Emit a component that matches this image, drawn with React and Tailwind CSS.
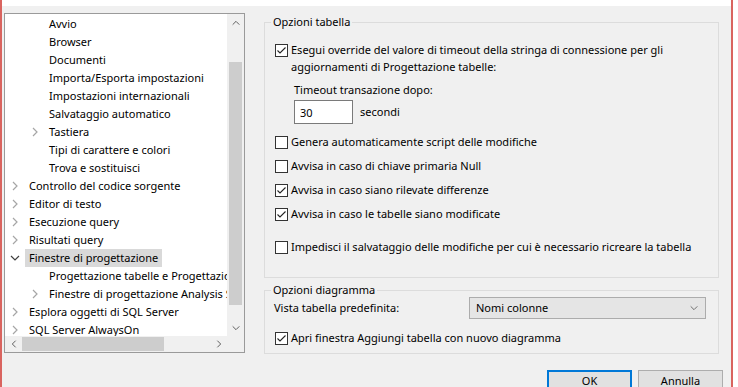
import { useState } from 'react'

// Tree nodes of the options dialog (level 0 = top level, 1 = child)
const treeItems = [
    { label: 'Avvio', level: 1 },
    { label: 'Browser', level: 1 },
    { label: 'Documenti', level: 1 },
    { label: 'Importa/Esporta impostazioni', level: 1 },
    { label: 'Impostazioni internazionali', level: 1 },
    { label: 'Salvataggio automatico', level: 1 },
    { label: 'Tastiera', level: 1, arrow: 'closed' },
    { label: 'Tipi di carattere e colori', level: 1 },
    { label: 'Trova e sostituisci', level: 1 },
    { label: 'Controllo del codice sorgente', level: 0, arrow: 'closed' },
    { label: 'Editor di testo', level: 0, arrow: 'closed' },
    { label: 'Esecuzione query', level: 0, arrow: 'closed' },
    { label: 'Risultati query', level: 0, arrow: 'closed' },
    { label: 'Finestre di progettazione', level: 0, arrow: 'open', selected: true },
    { label: 'Progettazione tabelle e Progettazione database', level: 1 },
    { label: 'Finestre di progettazione Analysis Services', level: 1, arrow: 'closed' },
    { label: 'Esplora oggetti di SQL Server', level: 0, arrow: 'closed' },
    { label: 'SQL Server AlwaysOn', level: 0, arrow: 'closed' },
]

function Chevron({ dir = 'right', className = '' }) {
    const points = {
        right: '4,2 8,6 4,10',
        left: '8,2 4,6 8,10',
        down: '2,4 6,8 10,4',
        up: '2,8 6,4 10,8',
    }[dir]
    return (
        <svg viewBox="0 0 12 12" className={className} fill="none" stroke="currentColor">
            <polyline points={points} strokeWidth="1.2" />
        </svg>
    )
}

function CheckBox({ checked, onChange }) {
    return (
        <button
            onClick={onChange}
            className="w-[13px] h-[13px] shrink-0 border border-[#333333] bg-white flex items-center justify-center"
        >
            {checked && (
                <svg viewBox="0 0 11 11" className="w-[11px] h-[11px]" fill="none" stroke="#222222">
                    <polyline points="1.5,5.5 4,8 9.5,2.5" strokeWidth="1.1" />
                </svg>
            )}
        </button>
    )
}

function OptionRow({ label, checked, onChange, className = '' }) {
    return (
        <div className={`h-[24px] flex items-center pl-[10px] ${className}`}>
            <CheckBox checked={checked} onChange={onChange} />
            <span className="ml-[3px] whitespace-nowrap">{label}</span>
        </div>
    )
}

function TreeView() {
    return (
        <div className="w-[241px] h-[340px] shrink-0 border border-[#9a9a9a] bg-white flex flex-col">
            <div className="flex flex-1 min-h-0">
                {/* Tree rows */}
                <div className="flex-1 overflow-hidden pt-[1px]">
                    {treeItems.map((item) => (
                        <div
                            key={item.label}
                            className={`h-[18px] flex items-center whitespace-nowrap ${item.level === 0 ? 'pl-[4px]' : 'pl-[24px]'}`}
                        >
                            <span className="w-[12px] h-[12px] shrink-0 flex items-center justify-center">
                                {item.arrow === 'closed' && <Chevron dir="right" className="w-[12px] h-[12px] text-[#a6a6a6]" />}
                                {item.arrow === 'open' && <Chevron dir="down" className="w-[12px] h-[12px] text-[#404040]" />}
                            </span>
                            <span className={`ml-[4px] px-[4px] leading-[18px] ${item.selected ? 'bg-[#d9d9d9]' : ''}`}>
                                {item.label}
                            </span>
                        </div>
                    ))}
                </div>
                {/* Vertical scrollbar */}
                <div className="w-[17px] shrink-0 bg-[#f0f0f0] flex flex-col items-center">
                    <div className="h-[17px] flex items-center justify-center text-[#606060]">
                        <Chevron dir="up" className="w-[10px] h-[10px]" />
                    </div>
                    <div className="flex-1 w-full px-[2px] pt-[31px] pb-[14px]">
                        <div className="h-full bg-[#cdcdcd]" />
                    </div>
                    <div className="h-[17px] flex items-center justify-center text-[#606060]">
                        <Chevron dir="down" className="w-[10px] h-[10px]" />
                    </div>
                </div>
            </div>
            {/* Horizontal scrollbar */}
            <div className="h-[16px] shrink-0 flex bg-[#f0f0f0]">
                <div className="flex-1 flex items-center">
                    <div className="w-[17px] h-full flex items-center justify-center text-[#606060]">
                        <Chevron dir="left" className="w-[10px] h-[10px]" />
                    </div>
                    <div className="flex-1 h-full py-[1px]">
                        <div className="w-[142px] h-full bg-[#cdcdcd]" />
                    </div>
                    <div className="w-[17px] h-full flex items-center justify-center text-[#606060]">
                        <Chevron dir="right" className="w-[10px] h-[10px]" />
                    </div>
                </div>
                <div className="w-[17px] shrink-0 bg-[#f0f0f0]" />
            </div>
        </div>
    )
}

export default function App() {
    const [opts, setOpts] = useState({
        override: true,
        script: false,
        nullKey: false,
        differences: true,
        modified: true,
        prevent: false,
        addTable: true,
    })
    const [timeout, setTimeoutValue] = useState('30')
    const toggle = (key) => setOpts({ ...opts, [key]: !opts[key] })

    return (
        <div className="w-[738px] h-[387px] overflow-hidden flex bg-white text-[11px] text-black font-['Noto_Sans','Liberation_Sans',sans-serif]">
            <div className="w-[2px] shrink-0 bg-[#d9645f]" />
            <div className="w-[729px] shrink-0 flex flex-col">
                <div className="h-[6px] shrink-0 bg-white" />
                <div className="flex-1 min-h-0 bg-[#f0f0f0] pl-[2px] pt-[7px]">
                    <div className="flex">
                        <TreeView />

                        {/* Options */}
                        <div className="ml-[19px] w-[455px] pt-[1px]">
                            <fieldset className="border border-[#dcdcdc] pb-[18px]">
                                <legend className="ml-[6px] px-[2px] leading-[16px]">Opzioni tabella</legend>
                                <div className="flex items-start pl-[10px] mt-[11px]">
                                    <div className="mt-[3px]">
                                        <CheckBox checked={opts.override} onChange={() => toggle('override')} />
                                    </div>
                                    <p className="ml-[3px] leading-[17px]">
                                        Esegui override del valore di timeout della stringa di connessione per gli
                                        <br />
                                        aggiornamenti di Progettazione tabelle:
                                    </p>
                                </div>
                                <div className="pl-[29px] mt-[6px] leading-[17px]">Timeout transazione dopo:</div>
                                <div className="pl-[29px] mt-[2px] flex items-center">
                                    <input
                                        value={timeout}
                                        onChange={(e) => setTimeoutValue(e.target.value)}
                                        className="w-[59px] h-[24px] border border-[#7a7a7a] bg-white px-[5px] outline-none"
                                    />
                                    <span className="ml-[7px]">secondi</span>
                                </div>
                                <OptionRow className="mt-[6px]" label="Genera automaticamente script delle modifiche" checked={opts.script} onChange={() => toggle('script')} />
                                <OptionRow label="Avvisa in caso di chiave primaria Null" checked={opts.nullKey} onChange={() => toggle('nullKey')} />
                                <OptionRow label="Avvisa in caso siano rilevate differenze" checked={opts.differences} onChange={() => toggle('differences')} />
                                <OptionRow label="Avvisa in caso le tabelle siano modificate" checked={opts.modified} onChange={() => toggle('modified')} />
                                <OptionRow className="mt-[9px]" label="Impedisci il salvataggio delle modifiche per cui è necessario ricreare la tabella" checked={opts.prevent} onChange={() => toggle('prevent')} />
                            </fieldset>

                            <fieldset className="mt-[5px] border border-[#dcdcdc] pb-[3px]">
                                <legend className="ml-[6px] px-[2px] leading-[14px]">Opzioni diagramma</legend>
                                <div className="h-[22px] flex items-center pl-[9px]">
                                    <span className="w-[195px]">Vista tabella predefinita:</span>
                                    <div className="w-[237px] h-[22px] border border-[#acacac] bg-[#e5e5e5] flex items-center justify-between pl-[6px] pr-[6px]">
                                        <span>Nomi colonne</span>
                                        <Chevron dir="down" className="w-[10px] h-[10px] text-[#707070]" />
                                    </div>
                                </div>
                                <OptionRow className="mt-[7px]" label="Apri finestra Aggiungi tabella con nuovo diagramma" checked={opts.addTable} onChange={() => toggle('addTable')} />
                            </fieldset>
                        </div>
                    </div>

                    {/* Dialog buttons */}
                    <div className="mt-[16px] flex justify-end pr-[8px] gap-[6px]">
                        <button className="w-[85px] h-[23px] border-2 border-[#0078d7] bg-[#e1e1e1]">OK</button>
                        <button className="w-[85px] h-[23px] border border-[#adadad] bg-[#e1e1e1]">Annulla</button>
                    </div>
                </div>
            </div>
            <div className="w-[2px] shrink-0 bg-[#d9645f]" />
            <div className="flex-1 bg-white" />
        </div>
    )
}
